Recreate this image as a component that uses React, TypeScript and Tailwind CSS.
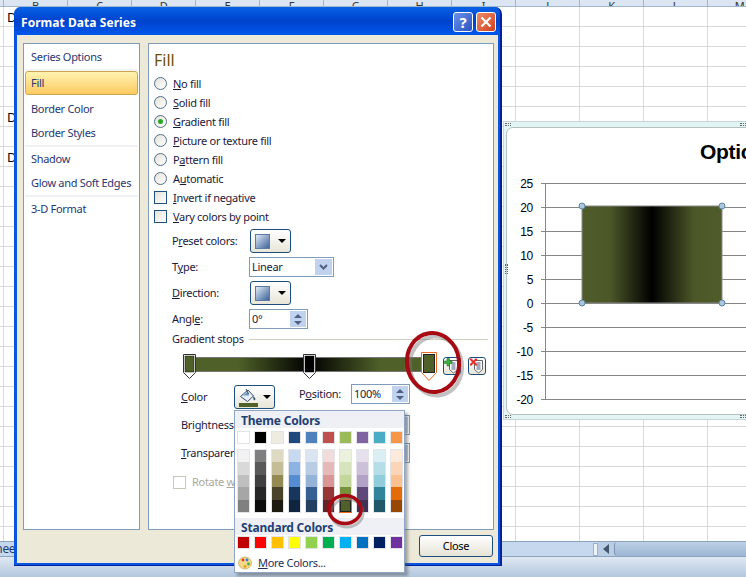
import React from "react";

const columns = ["B", "C", "D", "E", "F", "G", "H", "I", "J", "K", "L", "M"];
const rowCount = 27;
const dRows = [0, 5, 7];

const themeTop = ["#ffffff", "#000000", "#eeece1", "#1f497d", "#4f81bd", "#c0504d", "#9bbb59", "#8064a2", "#4bacc6", "#f79646"];
const ramps = [
  ["#f2f2f2", "#d9d9d9", "#bfbfbf", "#a6a6a6", "#808080"],
  ["#7f7f7f", "#595959", "#404040", "#262626", "#0d0d0d"],
  ["#ddd9c3", "#c4bd97", "#938953", "#494429", "#1d1b10"],
  ["#c6d9f0", "#8db3e2", "#548dd4", "#17365d", "#0f243e"],
  ["#dbe5f1", "#b8cce4", "#95b3d7", "#366092", "#244061"],
  ["#f2dcdb", "#e5b9b7", "#d99694", "#953734", "#632423"],
  ["#ebf1dd", "#d7e3bc", "#c3d69b", "#76923c", "#4f6128"],
  ["#e5e0ec", "#ccc1d9", "#b2a2c7", "#5f497a", "#3f3151"],
  ["#dbeef3", "#b7dde8", "#92cddc", "#31859b", "#205867"],
  ["#fdeada", "#fbd5b5", "#fac08f", "#e36c09", "#974806"],
];
const standard = ["#c00000", "#ff0000", "#ffc000", "#ffff00", "#92d050", "#00b050", "#00b0f0", "#0070c0", "#002060", "#7030a0"];

function Radio({ checked, children }: { checked?: boolean; children: React.ReactNode }) {
  return (
    <div className="flex h-[19px] items-center">
      <span className="flex h-[13px] w-[13px] items-center justify-center rounded-full border border-[#4f6f8c] bg-gradient-to-br from-[#e4e2d8] to-white">
        {checked && <span className="h-[5px] w-[5px] rounded-full bg-[#2aa52a]" />}
      </span>
      <span className="ml-[6px]">{children}</span>
    </div>
  );
}

function Check({ children }: { children: React.ReactNode }) {
  return (
    <div className="flex h-[19px] items-center">
      <span className="h-[13px] w-[13px] border border-[#1c5180] bg-gradient-to-br from-[#e4e2d8] to-white" />
      <span className="ml-[6px]">{children}</span>
    </div>
  );
}

function Caret() {
  return <span className="h-0 w-0 border-x-[4px] border-t-[4px] border-x-transparent border-t-black" />;
}

function GradSwatch() {
  return <span className="h-[15px] w-[15px] border border-[#5b7ba6] bg-gradient-to-br from-[#e3ecf8] to-[#3f6499]" />;
}

function SplitButton({ children, className }: { children: React.ReactNode; className?: string }) {
  return (
    <div className={"flex items-center justify-center gap-[8px] rounded-[3px] border border-[#1c4f7c] bg-gradient-to-b from-white to-[#e8e5d8] " + (className ?? "")}>
      {children}
    </div>
  );
}

function Spinner() {
  return (
    <div className="flex h-full w-[16px] flex-col items-center justify-center gap-[3px] bg-[#c1d2ee]">
      <span className="h-0 w-0 border-x-[4px] border-b-[4px] border-x-transparent border-b-[#4d6185]" />
      <span className="h-0 w-0 border-x-[4px] border-t-[4px] border-x-transparent border-t-[#4d6185]" />
    </div>
  );
}

function NumberBox({ value, className }: { value: string; className?: string }) {
  return (
    <div className={"flex h-[20px] items-center justify-between border border-[#7f9db9] bg-white p-[1px] pl-[2px] " + (className ?? "")}>
      <span>{value}</span>
      <Spinner />
    </div>
  );
}

function Stop({ color, className }: { color: string; className: string }) {
  return (
    <svg className={"absolute " + className} width="13" height="25" viewBox="0 0 13 25">
      <path d="M.5.5h12v18l-6 6-6-6z" fill="#fff" stroke="#333" />
      <rect x="2" y="2" width="9" height="16" fill={color} stroke="#111" strokeWidth=".5" />
    </svg>
  );
}

function StopButton({ kind }: { kind: "add" | "remove" }) {
  return (
    <div className="relative h-[18px] w-[18px] rounded-[3px] border border-[#1c4f7c] bg-gradient-to-b from-white to-[#e8e5d8]">
      <svg width="16" height="16" viewBox="0 0 16 16">
        <path d="M5.500 2.500h8v9l-4 3.500-4-3.500z" fill="#fff" stroke="#666" />
        <rect x="7.500" y="4" width="4" height="8" fill="#a3abc2" />
        {kind === "add" ? (
          <path d="M3 0.500h2.500v2.500H8v2.500H5.500V8H3V5.500H.5V3H3z" fill="#3fb13f" stroke="#1c7a1c" strokeWidth=".6" />
        ) : (
          <path d="M2 0l2.500 2.500L7 0l1.500 1.500L6 4l2.500 2.500L7 8 4.500 5.500 2 8 .5 6.500 3 4 .5 1.500z" fill="#e8322d" />
        )}
      </svg>
    </div>
  );
}

function Bucket() {
  return (
    <svg width="22" height="19" viewBox="0 0 22 19">
      <path d="M2.500 8.500L10 2l5.500 6-6 5.500z" fill="#e6edf6" stroke="#33506f" />
      <path d="M5 7.500L10 3.500l1 4z" fill="#6d92c4" />
      <path d="M8 1l2.500 5" stroke="#33506f" fill="none" />
      <path d="M15.500 8c1.500 1.500 2.500 3.500 1.300 4.200S14.800 10 15.500 8z" fill="#33506f" />
      <rect x="1" y="15" width="19" height="4" fill="#4f6128" />
    </svg>
  );
}

function Palette() {
  return (
    <svg width="14" height="14" viewBox="0 0 14 14">
      <ellipse cx="7" cy="7" rx="6.500" ry="6" fill="#f3d98b" stroke="#b99a45" strokeWidth=".6" />
      <circle cx="5" cy="4" r="1.400" fill="#e23c2b" />
      <circle cx="9" cy="4" r="1.400" fill="#3a78d8" />
      <circle cx="10.500" cy="8" r="1.400" fill="#3fae3f" />
      <circle cx="7" cy="10.500" r="1.400" fill="#e8a21c" />
    </svg>
  );
}

function Sheet() {
  return (
    <div className="flex h-full flex-col">
      <div className="flex h-[7px] shrink-0 overflow-hidden border-b border-[#9eb6ce] bg-[#dbe6f2]">
        <div className="w-[4px] shrink-0 border-r border-[#9eb6ce]" />
        {columns.map((c) => (
          <div key={c} className="flex h-[6px] w-[64px] shrink-0 items-end justify-center border-r border-[#9eb6ce] text-[11px] leading-[11px] text-[#333]">
            <span className="translate-y-[5px]">{c}</span>
          </div>
        ))}
      </div>
      <div className="flex-1 overflow-hidden bg-white">
        {Array.from({ length: rowCount }).map((_, r) => (
          <div key={r} className="flex h-[20px]">
            <div className="w-[4px] shrink-0 border-r border-b border-[#d9d9d9]" />
            {columns.map((c, i) => (
              <div key={c} className="flex w-[64px] shrink-0 items-center border-r border-b border-[#d9d9d9] pl-[3px] text-[13px] text-black">
                {i === 0 && dRows.includes(r) ? "D" : ""}
              </div>
            ))}
          </div>
        ))}
      </div>
      <div className="flex h-[16px] shrink-0 items-center border-t border-b border-[#8ba3bd] bg-[#c6d8ee]">
        <span className="-ml-[11px] w-[604px] text-[12px] leading-none text-[#1f3a6e]">Sheet1</span>
        <span className="h-[13px] w-[5px] border border-[#9cb2cb] bg-[#eef3f9]" />
        <div className="flex h-full w-[16px] items-center justify-center bg-[#b9cde4]">
          <span className="h-0 w-0 border-y-[5px] border-r-[6px] border-y-transparent border-r-[#44566c]" />
        </div>
        <div className="h-full flex-1 rounded-l-[3px] border-l border-[#7d95b0] bg-gradient-to-b from-[#bdd0e6] to-[#9db6d3]" />
      </div>
      <div className="h-[20px] shrink-0 bg-gradient-to-b from-[#e0e8f2] to-[#b3c7de]" />
    </div>
  );
}

function Chart() {
  const labels = [25, 20, 15, 10, 5, 0, -5, -10, -15, -20];
  const corners = [[582, 206], [722, 206], [582, 303], [722, 303]];
  return (
    <div className="absolute left-[503px] top-[121px] h-[299px] w-[260px] border border-[#c6d6d6] bg-[#e2f4f4] pl-[2px] pt-[5px]">
      <div className="h-[288px] w-[255px] rounded-[7px] border border-[#b3c0c0] bg-white">
        <svg width="240" height="287" viewBox="507 128 240 287">
          <defs>
            <linearGradient id="barFill" x1="0" x2="1" y1="0" y2="0">
              <stop offset="0" stopColor="#4f5c2a" />
              <stop offset="0.2" stopColor="#4b5728" />
              <stop offset="0.5" stopColor="#000000" />
              <stop offset="0.8" stopColor="#4b5728" />
              <stop offset="1" stopColor="#4f5c2a" />
            </linearGradient>
          </defs>
          <text x="700" y="159" fontFamily="'Liberation Sans', sans-serif" fontWeight="700" fontSize="21" fill="#000">Optic</text>
          {labels.map((l, i) => (
            <g key={l}>
              <line x1="541" x2="747" y1={183.5 + i * 24} y2={183.5 + i * 24} stroke="#868686" />
              <text x="533" y={188 + i * 24} textAnchor="end" fontFamily="'Liberation Sans', sans-serif" fontSize="12" fill="#000">{l}</text>
            </g>
          ))}
          <line x1="545.500" x2="545.500" y1="183" y2="400" stroke="#868686" />
          <rect x="582" y="206" width="140" height="97" fill="url(#barFill)" stroke="#8a8a8a" />
          {corners.map(([x, y]) => (
            <circle key={x + "-" + y} cx={x} cy={y} r="3" fill="#a9c6dc" stroke="#5d87a6" />
          ))}
        </svg>
      </div>
      {/* resize grips on the chart frame */}
      <span className="absolute left-[1px] top-[1px] h-[3px] w-[6px] border-y border-dotted border-[#666]" />
      <span className="absolute right-[16px] top-[1px] h-[3px] w-[6px] border-y border-dotted border-[#666]" />
      <span className="absolute left-[1px] top-[142px] h-[10px] w-[3px] border-x border-dotted border-[#666]" />
      <span className="absolute bottom-[1px] left-[1px] h-[3px] w-[6px] border-y border-dotted border-[#666]" />
      <span className="absolute bottom-[1px] right-[16px] h-[3px] w-[6px] border-y border-dotted border-[#666]" />
    </div>
  );
}

function Sidebar() {
  const item = "flex h-[24px] items-center pl-[6px]";
  return (
    <div className="h-[487px] w-[117px] shrink-0 border border-[#7f9db9] bg-white px-px pt-px text-[#27376f]">
      <div className={item}>Series Options</div>
      <div className="h-[2px] bg-[#f4f4f8]" />
      <div className="flex h-[24px] items-center rounded-[3px] border border-[#c9a64f] bg-gradient-to-b from-[#fff3b0] to-[#fdcb60] pl-[5px]">Fill</div>
      <div className="h-[2px]" />
      <div className={item}>Border Color</div>
      <div className={item}>Border Styles</div>
      <div className="h-[2px] bg-[#f0f0f6]" />
      <div className={item}>Shadow</div>
      <div className={item}>Glow and Soft Edges</div>
      <div className="h-[2px] bg-[#f0f0f6]" />
      <div className={item}>3-D Format</div>
    </div>
  );
}

function FillPanel() {
  const label = "w-[77px]";
  return (
    <div className="h-[487px] w-[346px] shrink-0 overflow-hidden border border-[#7f9db9] bg-white pl-[5px] text-[#1a1a3a]">
      <div className="flex h-[30px] items-start pt-[5px] text-[16px] leading-[22px] tracking-normal text-[#6e5200]">Fill</div>
      <Radio><u>N</u>o fill</Radio>
      <Radio><u>S</u>olid fill</Radio>
      <Radio checked><u>G</u>radient fill</Radio>
      <Radio><u>P</u>icture or texture fill</Radio>
      <Radio>P<u>a</u>ttern fill</Radio>
      <Radio>A<u>u</u>tomatic</Radio>
      <Check><u>I</u>nvert if negative</Check>
      <Check><u>V</u>ary colors by point</Check>

      <div className="pl-[18px]">
        <div className="mt-[3px] flex h-[24px] items-center">
          <span className={label}>P<u>r</u>eset colors:</span>
          <SplitButton className="ml-px h-[24px] w-[41px]"><GradSwatch /><Caret /></SplitButton>
        </div>
        <div className="mt-[4px] flex h-[20px] items-center">
          <span className={label}>T<u>y</u>pe:</span>
          <div className="flex h-[20px] w-[85px] items-center justify-between border border-[#7f9db9] bg-white p-px pl-[2px]">
            <span>Linear</span>
            <div className="flex h-full w-[17px] items-center justify-center bg-[#c1d2ee]">
              <svg width="9" height="6" viewBox="0 0 9 6"><path d="M1 1l3.500 3.500L8 1" fill="none" stroke="#4d6185" strokeWidth="2" /></svg>
            </div>
          </div>
        </div>
        <div className="mt-[4px] flex h-[24px] items-center">
          <span className={label}><u>D</u>irection:</span>
          <SplitButton className="ml-px h-[24px] w-[41px]"><GradSwatch /><Caret /></SplitButton>
        </div>
        <div className="mt-[4px] flex h-[20px] items-center">
          <span className={label}>Angl<u>e</u>:</span>
          <NumberBox value="0°" className="w-[59px]" />
        </div>
        <div className="mt-[2px] flex h-[16px] items-center">
          <span>Gradient stops</span>
          <div className="ml-[5px] mr-[5px] h-px flex-1 bg-[#d0d0bf]" />
        </div>

        <div className="mt-[5px] flex h-[29px] items-start pl-[11px]">
          <div className="relative h-[29px] w-[254px]">
            <div className="absolute left-[6px] top-[5px] h-[15px] w-[240px] border border-[#777] bg-[linear-gradient(to_right,#4f6128_0%,#4f6128_20%,#000_50%,#4f6128_80%,#4f6128_100%)]" />
            <Stop color="#4f6128" className="left-0 top-[2px]" />
            <Stop color="#000000" className="left-[120px] top-[2px]" />
            <svg className="absolute left-[238px] top-0" width="16" height="29" viewBox="0 0 16 29">
              <path d="M.5.5h15v20l-7.500 8-7.500-8z" fill="#fff" stroke="#ee6a1c" />
              <rect x="2.500" y="2.500" width="11" height="18" fill="#4f6128" stroke="#222" />
            </svg>
          </div>
          <div className="ml-[6px] mt-[5px] flex gap-[7px]">
            <StopButton kind="add" />
            <StopButton kind="remove" />
          </div>
        </div>

        <div className="mt-[3px] flex h-[25px] items-start">
          <span className="ml-[9px] mt-[8px] w-[53px]"><u>C</u>olor</span>
          <SplitButton className="mt-px h-[24px] w-[41px] !gap-[3px]"><Bucket /><Caret /></SplitButton>
          <span className="ml-[24px] mt-[5px] w-[52px]">P<u>o</u>sition:</span>
          <NumberBox value="100%" className="w-[59px]" />
        </div>
        <div className="mt-[6px] flex h-[20px] items-center pl-[9px]">
          <span className="w-[170px]">Brightness:</span>
          <NumberBox value="" className="w-[59px]" />
        </div>
        <div className="mt-[8px] flex h-[20px] items-center pl-[9px]">
          <span className="w-[170px]"><u>T</u>ransparency:</span>
          <NumberBox value="" className="w-[59px]" />
        </div>
        <div className="mt-[9px] flex h-[20px] items-center pl-px text-[#aca899]">
          <span className="h-[13px] w-[13px] border border-[#c9c7ba]" />
          <span className="ml-[6px]">Rotate <u>w</u>ith shape</span>
        </div>
      </div>
    </div>
  );
}

function Dialog() {
  return (
    <div className="absolute left-[14px] top-[7px] flex h-[559px] w-[488px] flex-col overflow-hidden rounded-t-[7px] border-r-2 border-b border-[#00209c] bg-[#0a55e0]">
      <div className="flex h-[28px] shrink-0 items-center justify-between bg-gradient-to-b from-[#0a62e6] via-[#0042cc] to-[#0058ec] pl-[7px] pr-[4px] pt-[2px]">
        <span className="mt-[2px] text-[12px] font-bold tracking-[0.05px] text-white">Format Data Series</span>
        <div className="flex gap-[3px]">
          <div className="flex h-[20px] w-[20px] items-center justify-center rounded-[3px] border border-white bg-gradient-to-br from-[#6d90e8] to-[#2a52c4] text-[15px] font-bold leading-none text-white">?</div>
          <div className="flex h-[20px] w-[20px] items-center justify-center rounded-[3px] border border-white bg-gradient-to-br from-[#ee8a68] to-[#cf3f17]">
            <svg width="12" height="12" viewBox="0 0 12 12"><path d="M1.500 1.500l9 9M10.500 1.500l-9 9" stroke="#fff" strokeWidth="2.200" /></svg>
          </div>
        </div>
      </div>
      <div className="mb-[2px] ml-[3px] mr-[2px] flex flex-1 flex-col bg-[#ece9d8] pl-[6px]">
        <div className="mt-[8px] flex gap-[8px]">
          <Sidebar />
          <FillPanel />
        </div>
        <div className="mr-[5px] mt-[5px] flex justify-end">
          <div className="flex h-[22px] w-[74px] items-center justify-center rounded-[3px] border border-[#1c4f7c] bg-gradient-to-b from-white to-[#e6e3d6] text-black">Close</div>
        </div>
      </div>
    </div>
  );
}

function ColorPopup() {
  const heading = "flex h-[17px] items-center bg-[#eef0f5] pl-[6px] text-[12px] font-bold tracking-[-0.2px] text-[#1f3f73]";
  return (
    <div className="absolute left-[234px] top-[410px] h-[163px] w-[171px] border border-[#8ea5c4] bg-white shadow-[3px_3px_3px_rgba(70,70,70,0.45)]">
      <div className={heading + " pt-[2px]"}>Theme Colors</div>
      <div className="mt-[3px] flex gap-[4px] pl-[2px]">
        {themeTop.map((c) => (
          <span key={c} className="h-[13px] w-[13px] border border-[#e2e4e7]" style={{ backgroundColor: c }} />
        ))}
      </div>
      <div className="mt-[5px] flex gap-[4px] pl-[2px]">
        {ramps.map((ramp, col) => (
          <div key={col} className="flex w-[13px] flex-col border border-[#e2e4e7]">
            {ramp.map((c, i) => (
              <span key={c} className={col === 6 && i === 4 ? "relative h-[12.4px] border border-[#222] outline outline-1 outline-[#ee6a1c]" : "h-[12.4px]"} style={{ backgroundColor: c }} />
            ))}
          </div>
        ))}
      </div>
      <div className={heading + " mt-[5px] pt-[4px]"}>Standard Colors</div>
      <div className="mt-px flex gap-[4px] pl-[2px]">
        {standard.map((c) => (
          <span key={c} className="h-[13px] w-[13px] border border-[#e2e4e7]" style={{ backgroundColor: c }} />
        ))}
      </div>
      <div className="mt-[6px] flex h-[16px] items-center gap-[6px] pl-[3px] text-[#1f2f55]">
        <Palette />
        <span><u>M</u>ore Colors...</span>
      </div>
    </div>
  );
}

export default function App() {
  return (
    <div className="relative h-[577px] w-[746px] overflow-hidden bg-white font-['Noto_Sans',sans-serif] text-[11px] leading-[10px] tracking-[-0.3px]">
      <Sheet />
      <Chart />
      <Dialog />
      <ColorPopup />

      {/* red callout rings drawn over the screenshot */}
      <svg className="absolute left-[395px] top-[320px]" width="80" height="90" viewBox="0 0 80 90">
        <ellipse cx="41" cy="46" rx="26" ry="29.500" fill="none" stroke="#777" strokeOpacity=".45" strokeWidth="4" transform="rotate(-8 41 46)" />
        <ellipse cx="38" cy="42.500" rx="26" ry="29.500" fill="none" stroke="#a80a14" strokeWidth="4" transform="rotate(-8 38 42.500)" />
      </svg>
      <svg className="absolute left-[320px] top-[488px]" width="50" height="44" viewBox="0 0 50 44">
        <ellipse cx="27" cy="25" rx="16" ry="14" fill="none" stroke="#777" strokeOpacity=".45" strokeWidth="3" />
        <ellipse cx="25" cy="21.500" rx="16" ry="14" fill="none" stroke="#a80a14" strokeWidth="3.500" />
      </svg>
    </div>
  );
}
